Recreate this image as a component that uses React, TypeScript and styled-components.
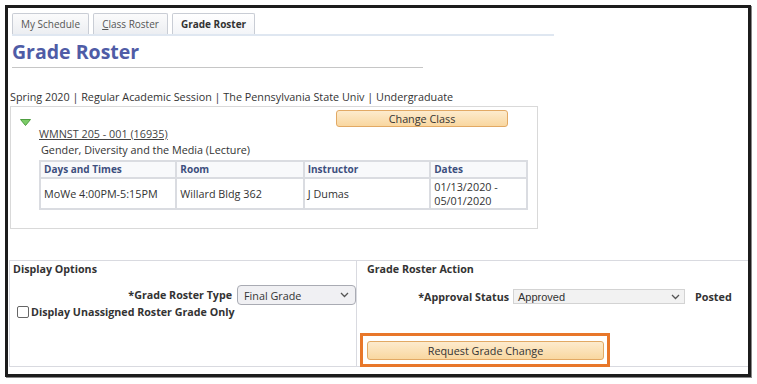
import styled, { createGlobalStyle } from "styled-components";

const GlobalStyle = createGlobalStyle`
  html, body {
    margin: 0;
    padding: 0;
    background: #fff;
  }
  body {
    font-family: "Open Sans", "Liberation Sans", sans-serif;
    color: #333;
  }
  * {
    box-sizing: border-box;
  }
`;

const Frame = styled.div`
  margin: 5px;
  width: 746px;
  height: 372px;
  border: 3px solid #1c1c1c;
  background: #fff;
  padding-top: 5px;
  box-shadow: 1px 1px 0 #888;
`;

const TabBar = styled.div`
  display: flex;
  align-items: flex-end;
  margin-left: 4px;
  width: 542px;
  height: 23px;
  border-bottom: 2px solid #dfe7f1;
`;

const Tab = styled.div<{ $width: number; $active?: boolean }>`
  display: flex;
  align-items: center;
  justify-content: center;
  width: ${(p) => p.$width}px;
  height: 21px;
  margin-right: 4px;
  border: 1px solid #c9cdd5;
  border-bottom: none;
  border-radius: 2px 2px 0 0;
  background: ${(p) =>
    p.$active
      ? "linear-gradient(#ffffff, #f3f5f8)"
      : "linear-gradient(#fbfbfc, #eceef2)"};
  font-size: 10px;
  font-weight: ${(p) => (p.$active ? 700 : 400)};
  color: ${(p) => (p.$active ? "#333" : "#555")};

  u {
    text-decoration: underline;
  }
`;

const Title = styled.h1`
  margin: 2px 0 0 4px;
  font-size: 19.5px;
  line-height: 28px;
  font-weight: 700;
  color: #4f5ca6;
`;

const Divider = styled.div`
  margin: 1px 0 0 4px;
  width: 411px;
  height: 1px;
  background: #c6c6c6;
`;

const Term = styled.div`
  margin: 21px 0 0 2px;
  font-size: 10.8px;
  line-height: 16px;
  color: #333;
`;

const ClassBox = styled.div`
  margin: 1px 0 0 2px;
  width: 528px;
  height: 123px;
  border: 1px solid #d9d9d9;
`;

const BoxHead = styled.div`
  display: flex;
  align-items: flex-end;
  justify-content: space-between;
  padding: 3px 29px 0 9px;
`;

const Caret = styled.svg`
  margin-bottom: 1px;
`;

const OrangeButton = styled.div<{ $width: number; $height: number }>`
  display: flex;
  align-items: center;
  justify-content: center;
  width: ${(p) => p.$width}px;
  height: ${(p) => p.$height}px;
  border: 1px solid #e2a964;
  border-radius: 3px;
  background: linear-gradient(#fdebcd, #f9d7a0);
  font-size: 10.8px;
  color: #333;
`;

const ClassLink = styled.div`
  margin-left: 28px;
  font-size: 10.8px;
  line-height: 14px;
  color: #444;
  text-decoration: underline;
`;

const ClassDesc = styled.div`
  margin: 2px 0 0 30px;
  font-size: 10.8px;
  line-height: 14px;
  color: #333;
`;

const MeetingTable = styled.table`
  margin: 3px 0 0 28px;
  width: 489px;
  border-collapse: collapse;
  border: 2px solid #dadce1;
`;

const HeadCell = styled.th<{ $width: number }>`
  width: ${(p) => p.$width}px;
  height: 17px;
  padding: 0 3px;
  border: 2px solid #dadce1;
  background: #f8f9fb;
  text-align: left;
  font-size: 10px;
  line-height: 13px;
  font-weight: 700;
  color: #3d4f7e;
`;

const Cell = styled.td`
  height: 31px;
  padding: 0 3px;
  border: 2px solid #dadce1;
  font-size: 10.8px;
  line-height: 14px;
  color: #333;
`;

const Panels = styled.div`
  display: flex;
  margin: 31px 0 0 1px;
  width: 739px;
  height: 107px;
`;

const OptionsPanel = styled.div`
  width: 348px;
  border: 1px solid #d9dae0;
`;

const ActionPanel = styled.div`
  flex: 1;
  border-top: 1px solid #d9dae0;
  border-bottom: 1px solid #d9dae0;
  padding-left: 10px;
`;

const PanelTitle = styled.div<{ $indent: number }>`
  padding-left: ${(p) => p.$indent}px;
  font-size: 10.7px;
  line-height: 16px;
  font-weight: 700;
  color: #333;
`;

const FieldRow = styled.div<{ $top: number }>`
  display: flex;
  align-items: center;
  margin-top: ${(p) => p.$top}px;
`;

const FieldLabel = styled.div<{ $width: number }>`
  width: ${(p) => p.$width}px;
  text-align: right;
  font-size: 10.7px;
  font-weight: 700;
  color: #333;
`;

const RoundSelect = styled.div`
  display: flex;
  align-items: center;
  justify-content: space-between;
  margin-left: 5px;
  width: 119px;
  height: 20px;
  padding: 0 6px;
  border: 1px solid #a9abb3;
  border-radius: 4px;
  background: #f0f0f3;
  font-size: 10.8px;
  color: #333;
`;

const FlatSelect = styled.div`
  display: flex;
  align-items: center;
  justify-content: space-between;
  margin-left: 4px;
  width: 172px;
  height: 15px;
  padding: 0 4px;
  border: 1px solid #d3d3d3;
  background: #f2f2f2;
  font-family: "Liberation Sans", Arial, sans-serif;
  font-size: 11px;
  color: #333;
`;

const Status = styled.div`
  margin-left: 10px;
  font-size: 10.8px;
  font-weight: 700;
  color: #333;
`;

const CheckRow = styled.label`
  display: flex;
  align-items: center;
  gap: 2px;
  margin: 0 0 0 7px;
  height: 14px;
  font-size: 10.7px;
  font-weight: 700;
  color: #333;
`;

const CheckBox = styled.span`
  display: inline-block;
  width: 12px;
  height: 12px;
  border: 1px solid #666;
  border-radius: 2px;
  background: #fff;
`;

const Highlight = styled.div`
  margin: 29px 0 0 -7px;
  width: 250px;
  height: 34px;
  padding: 5px 3px 0 4px;
  border: 3px solid #e8772a;
  background: #fff;
`;

const Chevron = () => (
  <svg width="9" height="6" viewBox="0 0 9 6">
    <path d="M1 1 L4.5 4.5 L8 1" fill="none" stroke="#555" strokeWidth="1.3" />
  </svg>
);

export default function App() {
  return (
    <>
      <GlobalStyle />
      <Frame>
        <TabBar>
          <Tab $width={77}>My Schedule</Tab>
          <Tab $width={75}>
            <span>
              <u>C</u>lass Roster
            </span>
          </Tab>
          <Tab $width={83} $active>
            Grade Roster
          </Tab>
        </TabBar>
        <Title>Grade Roster</Title>
        <Divider />
        <Term>
          Spring 2020 | Regular Academic Session | The Pennsylvania State Univ |
          Undergraduate
        </Term>

        <ClassBox>
          <BoxHead>
            <Caret width="11" height="7" viewBox="0 0 11 7">
              <polygon
                points="0.5,0.5 10.5,0.5 5.5,6.5"
                fill="#7ccb68"
                stroke="#4e9e40"
                strokeWidth="1"
              />
            </Caret>
            <OrangeButton $width={172} $height={17}>
              Change Class
            </OrangeButton>
          </BoxHead>
          <ClassLink>WMNST 205 - 001 (16935)</ClassLink>
          <ClassDesc>Gender, Diversity and the Media (Lecture)</ClassDesc>
          <MeetingTable>
            <thead>
              <tr>
                <HeadCell $width={137}>Days and Times</HeadCell>
                <HeadCell $width={128}>Room</HeadCell>
                <HeadCell $width={127}>Instructor</HeadCell>
                <HeadCell $width={97}>Dates</HeadCell>
              </tr>
            </thead>
            <tbody>
              <tr>
                <Cell>MoWe 4:00PM-5:15PM</Cell>
                <Cell>Willard Bldg 362</Cell>
                <Cell>J Dumas</Cell>
                <Cell>
                  01/13/2020 -
                  <br />
                  05/01/2020
                </Cell>
              </tr>
            </tbody>
          </MeetingTable>
        </ClassBox>

        <Panels>
          <OptionsPanel>
            <PanelTitle $indent={3}>Display Options</PanelTitle>
            <FieldRow $top={8}>
              <FieldLabel $width={222}>*Grade Roster Type</FieldLabel>
              <RoundSelect>
                Final Grade
                <Chevron />
              </RoundSelect>
            </FieldRow>
            <CheckRow>
              <CheckBox />
              Display Unassigned Roster Grade Only
            </CheckRow>
          </OptionsPanel>
          <ActionPanel>
            <PanelTitle $indent={0}>Grade Roster Action</PanelTitle>
            <FieldRow $top={12}>
              <FieldLabel $width={142}>*Approval Status</FieldLabel>
              <FlatSelect>
                Approved
                <Chevron />
              </FlatSelect>
              <Status>Posted</Status>
            </FieldRow>
            <Highlight>
              <OrangeButton $width={237} $height={19}>
                Request Grade Change
              </OrangeButton>
            </Highlight>
          </ActionPanel>
        </Panels>
      </Frame>
    </>
  );
}
